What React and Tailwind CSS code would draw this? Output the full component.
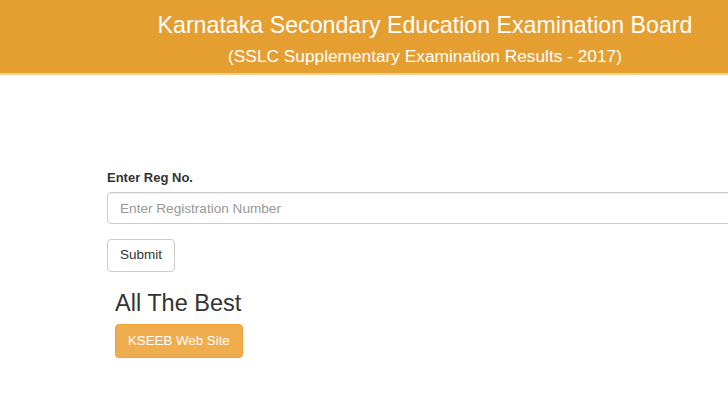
import React from 'react';

const App = () => {
    return (
        <div className="min-h-[404px] w-[728px] overflow-hidden bg-white font-['Liberation_Sans',Arial,sans-serif]">
            {/* Header */}
            <div className="h-[75px] bg-[#e59e30] border-b-2 border-[#f3cf8f] pl-[122px] flex flex-col items-center pt-[10px]">
                <h1 className="text-[23.2px] leading-[30px] text-white">Karnataka Secondary Education Examination Board</h1>
                <p className="text-[17.3px] leading-[22px] mt-[5px] text-white">(SSLC Supplementary Examination Results - 2017)</p>
            </div>

            <div className="pl-[107px] pt-[94px]">
                <label className="block text-[13px] font-bold text-[#333] leading-[18px]">Enter Reg No.</label>
                <input
                    type="text"
                    placeholder="Enter Registration Number"
                    className="mt-[5px] w-[660px] h-[32px] rounded-[4px] border border-[#ccc] px-[12px] text-[13.6px] text-[#555] placeholder:text-[#999] shadow-[inset_0_1px_1px_rgba(0,0,0,0.075)] outline-none"
                />
                <button className="mt-[15px] block h-[33px] px-[12px] rounded-[4px] border border-[#ccc] bg-white text-[13.5px] text-[#333]">
                    Submit
                </button>
                <div className="pl-[8px]">
                    <h2 className="mt-[18px] text-[23.5px] leading-[26px] text-[#333]">All The Best</h2>
                    <button className="mt-[8px] block h-[34px] px-[12px] rounded-[4px] bg-[#f0ad4e] border border-[#eea236] text-[13.3px] text-white">
                        KSEEB Web Site
                    </button>
                </div>
            </div>
        </div>
    );
};

export default App;
